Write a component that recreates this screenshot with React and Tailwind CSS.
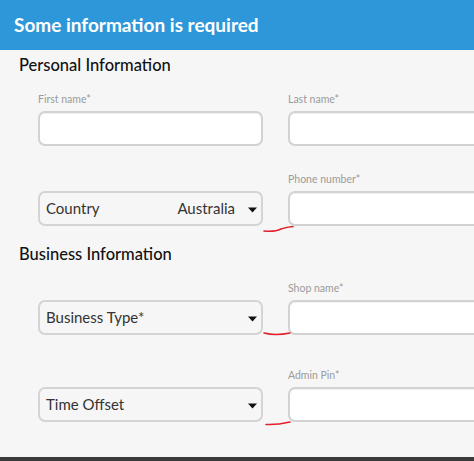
import React from 'react'

const Caret = () => (
    <svg width="9" height="6" viewBox="0 0 9 6" className="flex-none">
        <polygon points="0,0.5 9,0.5 4.5,5.5" fill="#111" />
    </svg>
)

const Squiggle = ({ d, className }) => (
    <svg width="34" height="10" viewBox="0 0 34 10" className={`absolute left-full ${className}`}>
        <path d={d} stroke="#e3202b" strokeWidth="1.6" fill="none" strokeLinecap="round" />
    </svg>
)

const Label = ({ children }) => (
    <div className="h-[14px] mb-[5px] text-[10.5px] leading-[14px] text-[#9b9b9b]">{children}</div>
)

const TextInput = () => (
    <div className="h-[35px] rounded-[7px] border-2 border-[#d2d2d2] bg-white shadow-[inset_0_1px_1px_rgba(0,0,0,0.06)]" />
)

const Select = ({ label, value }) => (
    <div className="h-[35px] rounded-[7px] border-2 border-[#d4d4d4] bg-[#f6f6f6] flex items-center pl-[6px] pr-[4px] text-[15px] text-[#333]">
        <span className="flex-1">{label}</span>
        {value && <span className="mr-[13px]">{value}</span>}
        <span className="pt-[3px]"><Caret /></span>
    </div>
)

const FieldRow = ({ leftLabel, left, rightLabel, squiggle, className = '' }) => (
    <div className={`flex items-end gap-[25px] ${className}`}>
        <div className="relative w-[225px] flex-none">
            {leftLabel && <Label>{leftLabel}</Label>}
            {left}
            {squiggle}
        </div>
        <div className="w-[210px] flex-none">
            <Label>{rightLabel}</Label>
            <TextInput />
        </div>
    </div>
)

export default function App() {
    return (
        <div className="w-[474px] h-[461px] overflow-hidden flex flex-col bg-[#f6f6f6] font-['Lato','Liberation_Sans',sans-serif]">
            <header className="h-[50px] flex-none bg-[#2e97d9] px-[14px] flex items-center text-white text-[19px] font-bold">
                Some information is required
            </header>

            <main className="flex-1 pl-[19px]">
                <h2 className="mt-[5px] text-[16.5px] leading-[20px] font-medium text-[#111]">Personal Information</h2>

                <div className="pl-[19px]">
                    <FieldRow
                        className="mt-[17px]"
                        leftLabel="First name*"
                        left={<TextInput />}
                        rightLabel="Last name*"
                    />
                    <FieldRow
                        className="mt-[26px]"
                        left={<Select label="Country" value="Australia" />}
                        rightLabel="Phone number*"
                        squiggle={<Squiggle className="top-[calc(100%-1px)]" d="M1 6 Q 12 7 18 4 Q 24 2 30 1.5" />}
                    />
                </div>

                <h2 className="mt-[18px] text-[16.5px] leading-[20px] font-medium text-[#111]">Business Information</h2>

                <div className="pl-[19px]">
                    <FieldRow
                        className="mt-[17px]"
                        left={<Select label="Business Type*" />}
                        rightLabel="Shop name*"
                        squiggle={<Squiggle className="top-[calc(100%-4px)]" d="M1 2 Q 12 5 27 2" />}
                    />
                    <FieldRow
                        className="mt-[33px]"
                        left={<Select label="Time Offset" />}
                        rightLabel="Admin Pin*"
                        squiggle={<Squiggle className="top-[calc(100%-1px)]" d="M3 3.5 Q 14 4 27 1" />}
                    />
                </div>
            </main>

            <footer className="h-[4px] flex-none bg-[#3b3b3b]" />
        </div>
    )
}
